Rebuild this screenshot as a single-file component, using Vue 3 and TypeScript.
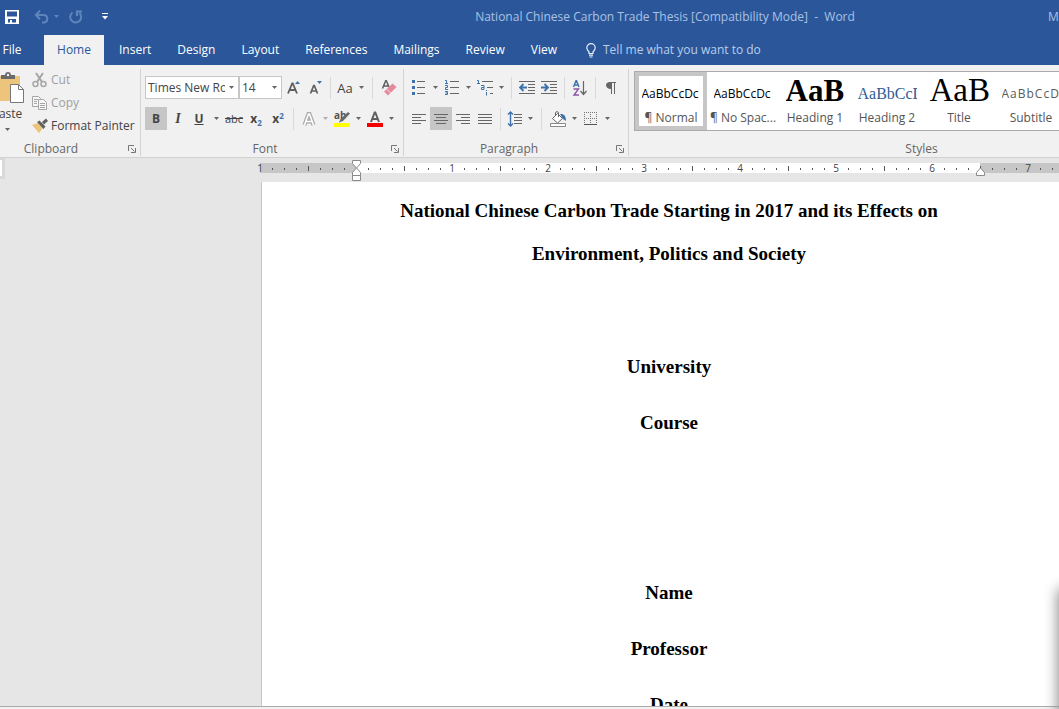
<script setup lang="ts">
interface StylePreset {
  name: string
  sample: string
  kind: string
}

const docTitle = 'National Chinese Carbon Trade Thesis [Compatibility Mode]  -  Word'

const tabs: string[] = ['Insert', 'Design', 'Layout', 'References', 'Mailings', 'Review', 'View']

const presets: StylePreset[] = [
  { name: '¶ Normal', sample: 'AaBbCcDc', kind: 'normal' },
  { name: '¶ No Spac...', sample: 'AaBbCcDc', kind: 'normal' },
  { name: 'Heading 1', sample: 'AaB', kind: 'heading1' },
  { name: 'Heading 2', sample: 'AaBbCcD', kind: 'heading2' },
  { name: 'Title', sample: 'AaB', kind: 'title' },
  { name: 'Subtitle', sample: 'AaBbCcDd', kind: 'subtitle' },
]

// Ruler geometry: 96 units per inch, one tick every eighth of an inch.
const inch = 96
const origin = 96
const ticks = Array.from({ length: 72 }, (_, i) => i - 8).filter((i) => i % 8 !== 0)
const inches = [-1, 1, 2, 3, 4, 5, 6, 7]
</script>

<template>
  <div class="word">
    <header class="titlebar">
      <div class="quick">
        <button class="qbtn" aria-label="Save">
          <svg width="14" height="14" viewBox="0 0 14 14"><path fill="#fff" fill-rule="evenodd" d="M0 0h14v14H0zM2 1.500v5h10v-5zM3 9v3.500h2V10h2v2.500h4V9z" /></svg>
        </button>
        <button class="qbtn undo" aria-label="Undo">
          <svg width="26" height="14" viewBox="0 0 26 14"><path fill="none" stroke="#5f85bd" stroke-width="2" d="M6 .8L1.800 5 6 9.200M2 5h7.500c5 0 5 7.500 0 7.500H8" /><path fill="#5f85bd" d="M20 5h5l-2.500 3z" /></svg>
        </button>
        <button class="qbtn redo" aria-label="Repeat">
          <svg width="14" height="14" viewBox="0 0 14 14"><path fill="none" stroke="#5f85bd" stroke-width="2" d="M3.500 2.500A5.500 5.500 0 1 0 10.500 3M8 6V1.500h5" /></svg>
        </button>
        <button class="qbtn more" aria-label="Customize Quick Access Toolbar">
          <svg width="6" height="7" viewBox="0 0 6 7"><path fill="#fff" d="M0 0h6v1H0zM0 3h6L3 6.500z" /></svg>
        </button>
      </div>
      <div class="doc-title">{{ docTitle }}</div>
      <div class="user">M</div>
    </header>

    <nav class="tabs">
      <button class="tab file">File</button>
      <button class="tab active">Home</button>
      <button v-for="t in tabs" :key="t" class="tab">{{ t }}</button>
      <button class="tell">
        <svg width="10" height="15" viewBox="0 0 10 15"><path fill="none" stroke="#e6eefa" stroke-width="1.200" d="M3 10.500V9C1.500 7.500.8 6.500.8 4.800a4.200 4.200 0 0 1 8.400 0C9.200 6.500 8.500 7.500 7 9v1.500zM3 12.200h4M3.500 14h3" /></svg>
        <span>Tell me what you want to do</span>
      </button>
    </nav>

    <section class="ribbon">
      <div class="group clipboard">
        <div class="clip-body">
          <button class="paste">
            <svg width="34" height="32" viewBox="0 0 34 32"><path fill="#ecc47c" d="M2 4h28v25H2z" /><path fill="#6a6a6a" d="M11 7V3h4c0-4 6-4 6 0h4v4z" /><circle cx="18" cy="3" r="1.200" fill="#f1f1f1" /><path fill="#fff" stroke="#777" d="M20.500 12.500h8l5 5v13h-13z" /><path fill="none" stroke="#777" d="M28.500 12.500v5h5" /></svg>
            <span>Paste</span>
            <svg class="paste-arrow" width="5" height="3" viewBox="0 0 5 3"><path fill="#666" d="M0 0h5L2.500 3z" /></svg>
          </button>
          <div class="clip-list">
            <button class="clip off">
              <svg width="16" height="16" viewBox="0 0 16 16"><path fill="none" stroke="#a6a6a6" stroke-width="2" d="M4 1l6 9M11 1L5 10" /><circle cx="3.500" cy="12" r="2.500" fill="none" stroke="#a6a6a6" stroke-width="1.500" /><circle cx="11.500" cy="12" r="2.500" fill="none" stroke="#a6a6a6" stroke-width="1.500" /></svg>
              <span>Cut</span>
            </button>
            <button class="clip off">
              <svg width="16" height="16" viewBox="0 0 16 16"><path fill="#f7f7f7" stroke="#a6a6a6" d="M.5 1.500h6l2 2v8h-8z" /><path stroke="#a6a6a6" d="M2 4.500h4M2 6.500h3M2 8.500h3" /><path fill="#f7f7f7" stroke="#a6a6a6" d="M6.500 4.500h5l3 3v7h-8z" /><path stroke="#a6a6a6" d="M8 8.500h5M8 10.500h5M8 12.500h5" /></svg>
              <span>Copy</span>
            </button>
            <button class="clip">
              <svg width="16" height="16" viewBox="0 0 16 16"><path fill="#ecc47c" d="M0 7l6-2 5 5-4 5z" /><path fill="#606060" d="M5 4l2.500-1.500 6 6L11.500 11zM10 4l4-3.500L16 3l-4 3.500z" /></svg>
              <span>Format Painter</span>
            </button>
          </div>
        </div>
        <div class="caption"><span>Clipboard</span><button class="launch" aria-label="Clipboard settings"><svg width="8" height="8" viewBox="0 0 8 8"><path fill="none" stroke="#777" d="M.5 6V.5H6M3 3l3.500 3.500M7.500 3v4.500H3" /></svg></button></div>
      </div>

      <div class="group font">
        <div class="rows">
          <div class="row tight">
            <label class="combo face"><select aria-label="Font"><option>Times New Roman</option></select><svg width="5" height="3" viewBox="0 0 5 3"><path fill="#666" d="M0 0h5L2.500 3z" /></svg></label>
            <label class="combo size"><select aria-label="Font size"><option>14</option></select><svg width="5" height="3" viewBox="0 0 5 3"><path fill="#666" d="M0 0h5L2.500 3z" /></svg></label>
            <button class="tool after-combo" aria-label="Grow font"><svg width="16" height="16" viewBox="0 0 16 16"><path fill="none" stroke="#5f5f5f" stroke-width="1.800" d="M2 13.500L6.200 3.500h.6L11 13.500M3.500 10h6" /><path fill="#3f72ad" d="M9 4l2.500-3L14 4z" /></svg></button>
            <button class="tool" aria-label="Shrink font"><svg width="16" height="16" viewBox="0 0 16 16"><path fill="none" stroke="#5f5f5f" stroke-width="1.700" d="M2.500 13.500L5.700 5.500h.6L9.500 13.500M3.500 11h5" /><path fill="#3f72ad" d="M9 1h5l-2.500 3z" /></svg></button>
            <i class="sep"></i>
            <button class="tool glyph">Aa</button>
            <button class="drop" aria-label="Change case options"><svg width="5" height="3" viewBox="0 0 5 3"><path fill="#666" d="M0 0h5L2.500 3z" /></svg></button>
            <i class="sep wide"></i>
            <button class="tool" aria-label="Clear formatting"><svg width="16" height="16" viewBox="0 0 16 16"><path fill="none" stroke="#5f5f5f" stroke-width="1.500" d="M1.500 8.500L4.700.8h.6L8 7M3 6h4" /><path fill="#e58a9c" d="M3 11.500l8.500-8L15.500 7 7 15.500z" /><path stroke="#f8dce1" d="M5.500 9l4 4" /></svg></button>
          </div>
          <div class="row">
            <button class="tool bold on">B</button>
            <button class="tool italic">I</button>
            <button class="tool slim underline">U</button>
            <button class="drop wide" aria-label="Underline options"><svg width="5" height="3" viewBox="0 0 5 3"><path fill="#666" d="M0 0h5L2.500 3z" /></svg></button>
            <button class="tool strike">abc</button>
            <button class="tool script">x<sub>2</sub></button>
            <button class="tool script">x<sup>2</sup></button>
            <i class="sep"></i>
            <button class="tool" aria-label="Text effects"><svg width="16" height="16" viewBox="0 0 16 16"><path fill="none" stroke="#a8a8a8" stroke-width="4" d="M3.500 14L7.500 3h1L12.500 14M5 10.500h6" /><path fill="none" stroke="#fff" stroke-width="1.600" d="M3.500 14L7.500 3h1L12.500 14M5 10.500h6" /></svg></button>
            <button class="drop" aria-label="Text effect options"><svg width="5" height="3" viewBox="0 0 5 3"><path fill="#b0b0b0" d="M0 0h5L2.500 3z" /></svg></button>
            <button class="tool" aria-label="Text highlight color"><svg width="17" height="17" viewBox="0 0 17 17"><text x="0" y="9" class="mini-ab">ab</text><path fill="#6a6a6a" d="M14 2l2 1.500L9 11l-4 1.500 1.500-3.500z" /><path fill="#ff0" d="M0 13h16v4H0z" /></svg></button>
            <button class="drop" aria-label="Highlight options"><svg width="5" height="3" viewBox="0 0 5 3"><path fill="#666" d="M0 0h5L2.500 3z" /></svg></button>
            <button class="tool" aria-label="Font color"><svg width="17" height="17" viewBox="0 0 17 17"><path fill="none" stroke="#5f5f5f" stroke-width="2" d="M4 12L7.700 2.500h.6L12 12M5.500 9h5" /><path fill="#f00000" d="M0 13h16v4H0z" /></svg></button>
            <button class="drop" aria-label="Font color options"><svg width="5" height="3" viewBox="0 0 5 3"><path fill="#666" d="M0 0h5L2.500 3z" /></svg></button>
          </div>
        </div>
        <div class="caption"><span>Font</span><button class="launch" aria-label="Font settings"><svg width="8" height="8" viewBox="0 0 8 8"><path fill="none" stroke="#777" d="M.5 6V.5H6M3 3l3.500 3.500M7.500 3v4.500H3" /></svg></button></div>
      </div>

      <div class="group paragraph">
        <div class="rows">
          <div class="row">
            <button class="tool" aria-label="Bullets"><svg width="16" height="16" viewBox="0 0 16 16"><path stroke="#666" d="M6 1.500h8M6 7.500h8M6 13.500h8" /><path fill="#3f72ad" d="M1 0h3v3H1zM1 6h3v3H1zM1 12h3v3H1z" /></svg></button>
            <button class="drop" aria-label="Bullet options"><svg width="5" height="3" viewBox="0 0 5 3"><path fill="#666" d="M0 0h5L2.500 3z" /></svg></button>
            <button class="tool" aria-label="Numbering"><svg width="16" height="16" viewBox="0 0 16 16"><path stroke="#666" d="M6 1.500h9M6 7.500h9M6 13.500h9" /><path fill="none" stroke="#3f72ad" d="M1 .5h1.500v3M1 3.500h3M1 5.500h2.500v2h-2v2H4M1 11.500h2.500v3H1M1.500 13H3" /></svg></button>
            <button class="drop" aria-label="Numbering options"><svg width="5" height="3" viewBox="0 0 5 3"><path fill="#666" d="M0 0h5L2.500 3z" /></svg></button>
            <button class="tool" aria-label="Multilevel list"><svg width="18" height="16" viewBox="0 0 18 16"><path stroke="#666" d="M6 1.500h11M11 7.500h6M14 13.500h3" /><path fill="none" stroke="#3f72ad" d="M1 .5h1.500v3M1 3.500h3M5 5.500h3v4H5.500v-2H8M10.500 10v1M10.500 12v3.500" /></svg></button>
            <button class="drop" aria-label="Multilevel options"><svg width="5" height="3" viewBox="0 0 5 3"><path fill="#666" d="M0 0h5L2.500 3z" /></svg></button>
            <i class="sep"></i>
            <button class="tool" aria-label="Decrease indent"><svg width="16" height="16" viewBox="0 0 16 16"><path stroke="#666" d="M0 1.500h16M9 4.500h7M9 7.500h7M9 10.500h7M0 13.500h16" /><path fill="none" stroke="#3f72ad" stroke-width="1.800" d="M8 7.500H1.500M4.500 4l-3.500 3.500L4.500 11" /></svg></button>
            <button class="tool" aria-label="Increase indent"><svg width="16" height="16" viewBox="0 0 16 16"><path stroke="#666" d="M0 1.500h16M9 4.500h7M9 7.500h7M9 10.500h7M0 13.500h16" /><path fill="none" stroke="#3f72ad" stroke-width="1.800" d="M0 7.500h6.500M3.500 4L7 7.500 3.500 11" /></svg></button>
            <i class="sep"></i>
            <button class="tool" aria-label="Sort"><svg width="16" height="16" viewBox="0 0 16 16"><path fill="none" stroke="#3f72ad" stroke-width="1.400" d="M1.500 7L4 .8h.5L7 7M2.500 5h4" /><path fill="none" stroke="#8a56a8" stroke-width="1.400" d="M1.500 9h5L2 15h5" /><path fill="none" stroke="#666" stroke-width="1.200" d="M11.500 1v13M8.500 11l3 3.500 3-3.500" /></svg></button>
            <i class="sep"></i>
            <button class="tool" aria-label="Show formatting marks"><svg width="12" height="14" viewBox="0 0 12 14"><path fill="#666" d="M11 1v1h-1v11H9V2H7v11H6V8C-.5 8-.5 1 5 1z" /></svg></button>
          </div>
          <div class="row">
            <button class="tool" aria-label="Align left"><svg width="16" height="12" viewBox="0 0 16 12"><path stroke="#666" d="M1 1.500h14M1 4.500h9M1 7.500h14M1 10.500h9" /></svg></button>
            <button class="tool on" aria-label="Center"><svg width="16" height="12" viewBox="0 0 16 12"><path stroke="#666" d="M1 1.500h14M3 4.500h10M1 7.500h14M3 10.500h10" /></svg></button>
            <button class="tool" aria-label="Align right"><svg width="16" height="12" viewBox="0 0 16 12"><path stroke="#666" d="M1 1.500h14M6 4.500h9M1 7.500h14M6 10.500h9" /></svg></button>
            <button class="tool" aria-label="Justify"><svg width="16" height="12" viewBox="0 0 16 12"><path stroke="#666" d="M1 1.500h14M1 4.500h14M1 7.500h14M1 10.500h14" /></svg></button>
            <i class="sep"></i>
            <button class="tool slim" aria-label="Line spacing"><svg width="16" height="16" viewBox="0 0 16 16"><path stroke="#666" d="M7 3.500h8M7 6.500h8M7 9.500h8M7 12.500h8" /><path fill="none" stroke="#3f72ad" stroke-width="1.400" d="M3.500 1v14M1 3.500L3.500 1 6 3.500M1 12.500L3.500 15 6 12.500" /></svg></button>
            <button class="drop" aria-label="Spacing options"><svg width="5" height="3" viewBox="0 0 5 3"><path fill="#666" d="M0 0h5L2.500 3z" /></svg></button>
            <i class="sep wide"></i>
            <button class="tool" aria-label="Shading"><svg width="17" height="16" viewBox="0 0 17 16"><path fill="#fff" stroke="#666" d="M2.500 7.500l5-5 5 5-5 4.500z" /><path fill="none" stroke="#666" d="M5.500 5V1.500c0-1 3-1 3 0V6" /><path fill="#3f72ad" d="M10 3c4-.5 6 2 6 7l-3-2z" /><path fill="#fff" stroke="#888" d="M.5 12.500h15v3H.5z" /></svg></button>
            <button class="drop" aria-label="Shading options"><svg width="5" height="3" viewBox="0 0 5 3"><path fill="#666" d="M0 0h5L2.500 3z" /></svg></button>
            <button class="tool" aria-label="Borders"><svg width="14" height="14" viewBox="0 0 14 14"><path fill="none" stroke="#777" stroke-dasharray="1 1" d="M0 .5h13M0 6.500h13M.5 0v13M6.500 0v13M12.500 0v13" /><path stroke="#555" d="M0 12.500h13" /></svg></button>
            <button class="drop" aria-label="Border options"><svg width="5" height="3" viewBox="0 0 5 3"><path fill="#666" d="M0 0h5L2.500 3z" /></svg></button>
          </div>
        </div>
        <div class="caption"><span>Paragraph</span><button class="launch" aria-label="Paragraph settings"><svg width="8" height="8" viewBox="0 0 8 8"><path fill="none" stroke="#777" d="M.5 6V.5H6M3 3l3.500 3.500M7.500 3v4.500H3" /></svg></button></div>
      </div>

      <div class="group styles">
        <div class="gallery">
          <button v-for="(p, i) in presets" :key="p.name" class="preset" :class="{ chosen: i === 0 }">
            <span class="sample" :class="p.kind">{{ p.sample }}</span>
            <span class="preset-name">{{ p.name }}</span>
          </button>
        </div>
        <div class="caption"><span>Styles</span></div>
      </div>
    </section>

    <div class="ruler-bar">
      <button class="tab-stop" aria-label="Tab selector"></button>
      <svg class="ruler" width="824" height="24" viewBox="0 0 824 24">
        <path fill="#c6c6c6" d="M0 5h96v10H0zM720 5h104v10H720z" />
        <path fill="#fff" d="M96 5h624v10H96z" />
        <g v-for="t in ticks" :key="t">
          <rect :x="origin + (t * inch) / 8" :y="t % 4 === 0 ? 8 : 10" width="1" :height="t % 4 === 0 ? 5 : 2" fill="#555" />
        </g>
        <text v-for="n in inches" :key="n" class="num" :x="origin + n * inch" y="14">{{ Math.abs(n) }}</text>
        <path fill="#fff" stroke="#8a8a8a" d="M92.500 2.500h8v3l-4 4.500-4-4.500zM92.500 17.500v-3l4-4.500 4 4.500v3zM92.500 17.500h8v5h-8z" />
        <path fill="#fff" stroke="#8a8a8a" d="M716.500 17.500v-3l4-4.500 4 4.500v3z" />
      </svg>
    </div>

    <main class="canvas">
      <article class="page">
        <p>National Chinese Carbon Trade Starting in 2017 and its Effects on Environment, Politics and Society</p>
        <p class="blank"></p>
        <p>University</p>
        <p>Course</p>
        <p class="blank"></p>
        <p class="blank"></p>
        <p>Name</p>
        <p>Professor</p>
        <p>Date</p>
      </article>
    </main>
    <footer class="status"></footer>
    <div class="edge-shadow"></div>
  </div>
</template>

<style>
body {
  margin: 0;
  overflow: hidden;
}
</style>

<style scoped>
.word {
  position: relative;
  display: flex;
  flex-direction: column;
  height: 100vh;
  overflow: hidden;
  background: #e6e6e6;
  color: #444;
  font: 12px/16px "Open Sans", "Noto Sans", sans-serif;
}
button {
  display: flex;
  align-items: center;
  justify-content: center;
  margin: 0;
  padding: 0;
  border: 0;
  background: none;
  color: inherit;
  font: inherit;
  white-space: nowrap;
}
svg {
  display: block;
  flex: none;
}
.titlebar {
  display: flex;
  align-items: center;
  flex: none;
  box-sizing: border-box;
  height: 35px;
  padding-bottom: 2px;
  background: #2b579a;
  color: #a9c1e4;
}
.quick {
  display: flex;
  flex: 0 0 282px;
  align-items: center;
  box-sizing: border-box;
  padding-left: 5px;
}
.undo { margin-left: 15px; }
.redo { margin-left: 9px; }
.more { margin-left: 19px; }
.doc-title {
  flex: 1;
  text-align: center;
  white-space: pre;
}
.user {
  flex: 0 0 11px;
  overflow: hidden;
}
.tabs {
  display: flex;
  flex: none;
  height: 30px;
  background: #2b579a;
  color: #fff;
}
.tab {
  padding: 0 13px;
}
.file {
  width: 44px;
  padding: 0 20px 0 0;
}
.active {
  width: 60px;
  margin-right: 2px;
  background: #f1f1f1;
  color: #2b579a;
}
.tell {
  gap: 7px;
  margin-left: 16px;
  color: #b9cdec;
}
.ribbon {
  display: flex;
  flex: none;
  height: 92px;
  border-bottom: 1px solid #d2d2d2;
  background: #f1f1f1;
}
.group {
  display: flex;
  flex: none;
  flex-direction: column;
  justify-content: space-between;
  box-sizing: border-box;
  margin: 4px 0 1px;
  border-right: 1px solid #d4d4d4;
}
.clipboard {
  width: 161px;
  margin-left: -20px;
}
.font {
  width: 263px;
  padding-left: 4px;
}
.paragraph {
  width: 225px;
  padding-left: 4px;
}
.styles {
  width: 584px;
  padding-left: 5px;
  border-right: 0;
}
.caption {
  display: flex;
  align-items: center;
  height: 14px;
  padding-right: 4px;
  color: #666;
}
.caption span {
  flex: 1;
  text-align: center;
}
.launch {
  justify-content: flex-end;
  width: 14px;
  height: 14px;
}
.clip-body {
  display: flex;
}
.paste {
  flex-direction: column;
  justify-content: flex-start;
  gap: 2px;
  width: 48px;
  margin-left: 3px;
  padding-top: 3px;
}
.paste-arrow {
  margin-top: 4px;
}
.clip-list {
  display: flex;
  flex-direction: column;
  gap: 1px;
  margin-left: 1px;
}
.clip {
  justify-content: flex-start;
  gap: 3px;
  height: 22px;
}
.off {
  color: #a0a0a0;
}
.rows {
  display: flex;
  flex-direction: column;
  gap: 8px;
  padding-top: 7px;
}
.row {
  display: flex;
  align-items: center;
  height: 23px;
}
.combo {
  display: flex;
  align-items: center;
  gap: 4px;
  box-sizing: border-box;
  height: 23px;
  padding-right: 4px;
  border: 1px solid #c6c6c6;
  background: #fff;
}
.combo select {
  flex: 1;
  min-width: 0;
  height: 21px;
  padding: 0 0 0 2px;
  border: 0;
  appearance: none;
  background: none;
  color: #444;
  font: inherit;
}
.face { width: 94px; }
.size { width: 43px; }
.after-combo { margin-left: 1px; }
.tool {
  flex: none;
  width: 22px;
  height: 23px;
}
.tool.slim {
  width: 20px;
}
.on {
  background: #c6c6c6;
}
.drop {
  flex: none;
  width: 11px;
  height: 23px;
}
.drop.wide {
  width: 14px;
}
.sep {
  flex: none;
  width: 1px;
  height: 22px;
  margin: 0 4px;
  background: #d9d9d9;
}
.tight .sep {
  margin: 0 3px;
}
.row .sep.wide {
  margin: 0 5px;
}
.glyph {
  font-size: 13px;
}
.bold { font-weight: 700; }
.italic {
  font-family: "Liberation Serif", serif;
  font-size: 14px;
  font-style: italic;
  font-weight: 700;
}
.underline {
  font-weight: 700;
  text-decoration: underline;
}
.strike {
  font-size: 11px;
  text-decoration: line-through;
}
.script {
  font-weight: 700;
}
.script sub,
.script sup {
  color: #3f72ad;
  font-size: 8px;
  line-height: 8px;
}
.script sub { align-self: flex-end; padding-bottom: 3px; }
.script sup { align-self: flex-start; padding-top: 5px; }
.mini-ab {
  fill: #555;
  font: 700 10px "Open Sans", sans-serif;
}
.gallery {
  display: flex;
  box-sizing: border-box;
  height: 60px;
  margin-top: 2px;
  border: 1px solid #ababab;
  background: #fff;
}
.preset {
  flex-direction: column;
  justify-content: flex-start;
  box-sizing: border-box;
  width: 72px;
  padding: 2px 2px 0;
  border: 4px solid transparent;
}
.chosen {
  border-color: #c6c6c6;
}
.sample {
  width: 59px;
  height: 32px;
  overflow: hidden;
  color: #000;
  line-height: 32px;
  text-align: left;
}
.heading1 {
  font-family: "Liberation Serif", serif;
  font-size: 31px;
  font-weight: 700;
  line-height: 25px;
}
.heading2 {
  color: #2f5c96;
  font-family: "Liberation Serif", serif;
  font-size: 16px;
}
.title {
  font-family: "Liberation Serif", serif;
  font-size: 33px;
  line-height: 24px;
}
.subtitle {
  color: #5a5a5a;
  letter-spacing: 1px;
}
.preset-name {
  color: #555;
}
.ruler-bar {
  display: flex;
  flex: none;
  gap: 255px;
  height: 24px;
}
.tab-stop {
  flex: none;
  box-sizing: content-box;
  width: 2px;
  height: 16px;
  border: solid #d9d9d9;
  border-width: 2px 3px 3px 0;
  background: #fff;
}
.ruler {
  overflow: visible;
}
.num {
  fill: #444;
  font: 10px "Open Sans", sans-serif;
  text-anchor: middle;
}
.canvas {
  flex: 1;
  min-height: 0;
  overflow: hidden;
}
.page {
  box-sizing: border-box;
  width: 816px;
  min-height: 100%;
  margin-left: 261px;
  padding: 7px 96px 0 95px;
  border-left: 1px solid #c6c6c6;
  background: #fff;
  color: #000;
  font: 700 19px/43px "Liberation Serif", serif;
  text-align: center;
}
.page p {
  margin: 0 0 13px;
}
.page .blank {
  height: 44px;
}
.status {
  flex: none;
  height: 2px;
  border-top: 1px solid #ababab;
  background: #f1f1f1;
}
.edge-shadow {
  position: absolute;
  top: 590px;
  bottom: -20px;
  left: 100%;
  width: 20px;
  box-shadow: 0 0 14px 1px #888;
}
</style>
